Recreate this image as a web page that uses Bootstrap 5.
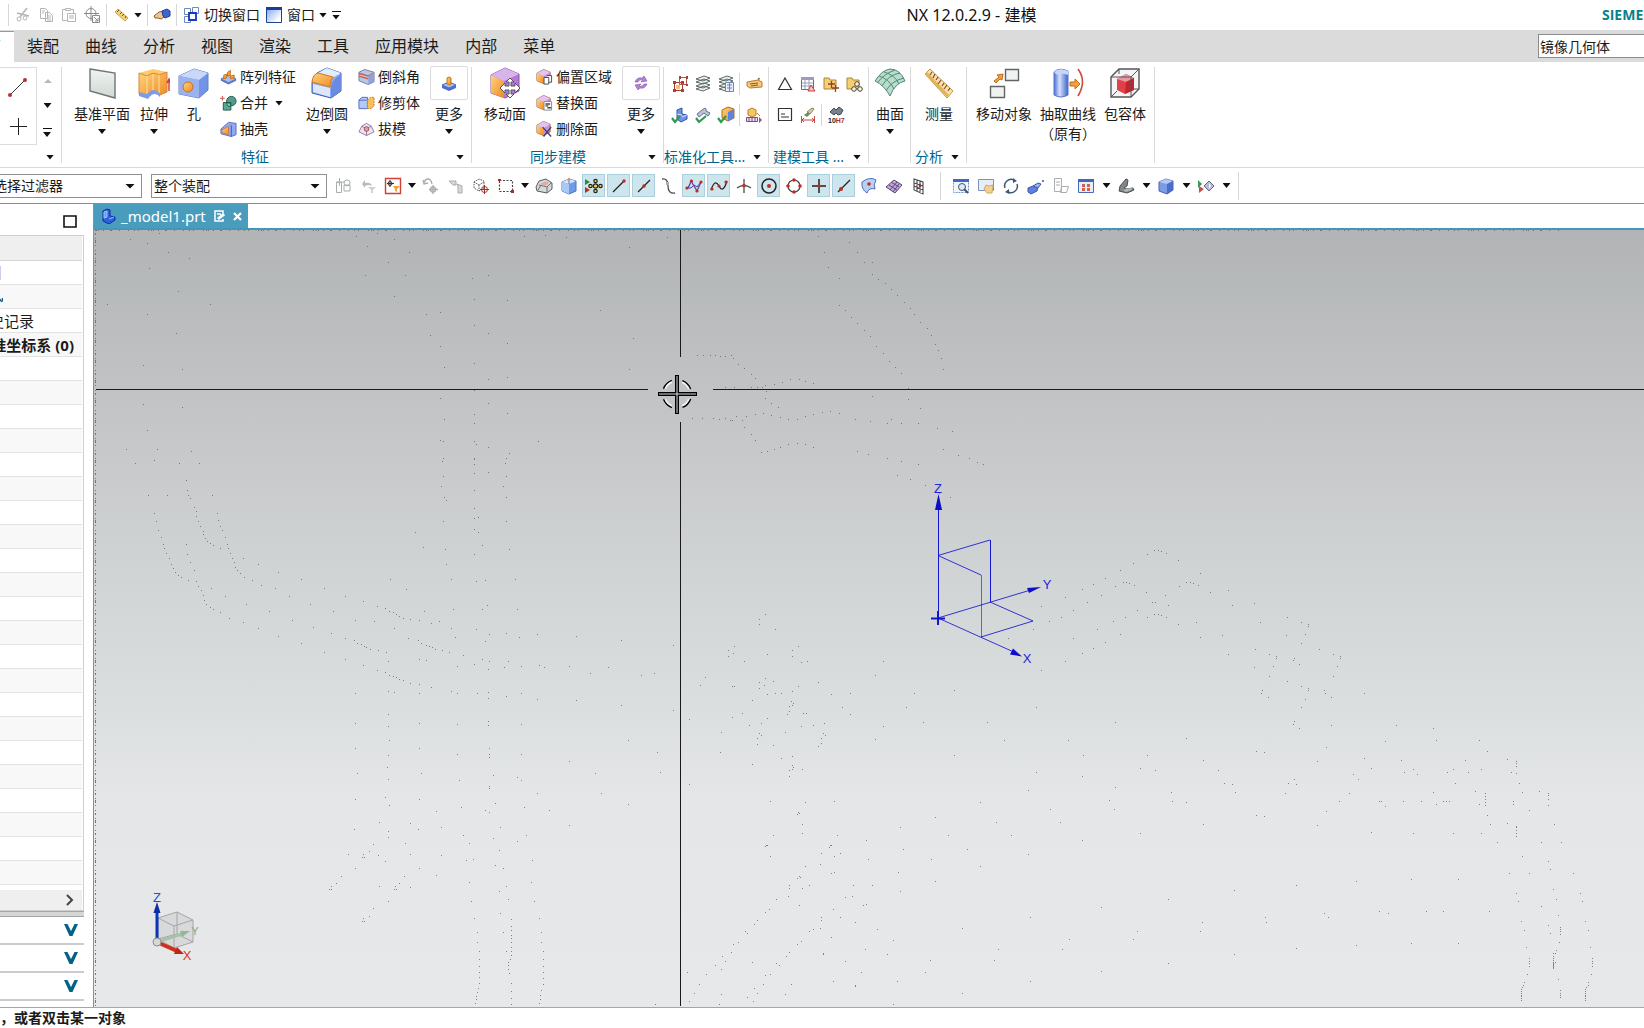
<!DOCTYPE html>
<html lang="zh-CN">
<head>
<meta charset="utf-8">
<meta name="viewport" content="width=device-width, initial-scale=1">
<title>NX 12.0.2.9 - 建模</title>
<link rel="stylesheet" href="https://cdn.jsdelivr.net/npm/bootstrap@5.3.0/dist/css/bootstrap.min.css">
<script src="https://cdn.jsdelivr.net/npm/bootstrap@5.3.0/dist/js/bootstrap.bundle.min.js"></script>
<style>
body{font-family:"Noto Sans","Noto Sans CJK SC",sans-serif;font-size:14px;line-height:20px;color:#1b1b1b;background:#fff;height:100vh;overflow:hidden}
button{background:none;border:0;padding:0;color:inherit;font:inherit;flex:none}
svg{display:block;flex:none}
.ic{width:18px;height:18px}
.ib{width:32px;height:32px}
.dn{display:block;flex:none;width:8px;height:5px;background:#111;clip-path:polygon(0 0,100% 0,50% 100%)}
.dnbar{display:block;flex:none;width:9px;border-top:1px solid #111;padding-top:3px}
.vsep{flex:none;width:1px;background:#d6d6d6}
/* title bar */
.titlebar{height:30px;gap:5px;padding-left:8px}
.titlebar .vsep{height:22px}
.titlebar .ttl{color:#111;font-size:16px}
.brandmark{font-family:"Open Sans","Noto Sans",sans-serif;font-weight:700;color:#0a8189;width:42px;overflow:hidden;white-space:nowrap}
/* menu tabs */
.menubar{height:32px;background:#dbdbdb;overflow:hidden}
.menubar a{color:#1b1b1b;text-decoration:none;font-size:16px;line-height:32px;padding:0 13px;white-space:nowrap}
.menubar a.active{background:#fff;margin-left:-44px;border-top:1px solid #999;line-height:30px}
.finder{width:108px;height:24px;margin-right:-2px;border:1px solid #8b8b8b;border-radius:0;padding:0 1px;font-size:14px;color:#1b1b1b}
/* ribbon */
.ribbon{border-bottom:1px solid #d9d9d9;padding-top:2px;overflow:hidden}
.rgroup{position:relative;white-space:nowrap}
.rgroup+.rgroup::before,.rgroup:last-child::after{content:"";position:absolute;top:3px;bottom:4px;width:1px;left:-1px;background:#dadada}
.rgroup:last-child::after{left:auto;right:0}
.gbody{height:83px;gap:8px}
.gbody.wide{padding:0 4px 0 12px}
.gbody.tight{padding:0 5px}
.gbody.roomy{padding:0 9px}
.gfoot{height:20px;color:#00638a}
.big{display:flex;flex-direction:column;align-items:center;min-width:32px;padding-top:3px}
.big .cap{margin-top:5px}
.big .dn{margin-top:5px}
.big .tile{width:38px;height:34px;border:1px solid #dcdcdc;border-radius:2px;display:flex;align-items:center;justify-content:center;margin:-1px 0}
.smallcol{margin:0 2px}
.smallcol button{display:flex;align-items:center;gap:3px;height:26px}
.smallcol .ic{width:17px}
.mini{padding-top:4px}
.mini button{display:flex;width:23px;height:31px;align-items:center;justify-content:center}
.mini .vsep{height:22px;margin:0 2px}
.gal{width:37px;height:78px;margin-top:3px;border:1px solid #dcdcdc;border-left:0}
.galnav{padding:4px 10px 0 6px}
/* selection bar */
.selbar{height:36px;border-bottom:1px solid #8c8c8c}
.pick{position:relative}
.pick select{appearance:none;width:100%;height:24px;border:1px solid #8f8f8f;border-radius:0;background:#fff;padding:0 2px;font-size:14px;line-height:20px;color:#1b1b1b}
.pick .dn{position:absolute;right:7px;top:10px;width:10px;height:5px;pointer-events:none}
.pick.filter{width:180px;margin-left:-38px}
.pick.scope{width:176px;margin-left:9px}
.tool{width:24px;height:24px;margin-right:1px;display:flex;align-items:center;justify-content:center}
.tool.on{background:#cde6ee;border:1px solid #a9d0dc;width:23px;margin-right:2px;height:23px}
.more{width:14px;height:24px;display:flex;align-items:center;justify-content:center}
.selbar .vsep{height:28px}
.selbar .endcap .more{width:15px}
/* navigator */
.navi{width:93px;overflow:hidden;padding-bottom:6px}
.navi .top{height:31px;padding-top:4px}
.tree{width:84px;border:1px solid #cfcfcf;border-left:0;padding-right:1px;overflow:hidden}
.tree .hd{height:25px;background:#efefef;border-bottom:1px solid #d5d5d5;flex:none}
.tree li{height:24px;display:flex;justify-content:flex-end;align-items:center;border-bottom:1px solid #e3e3e3;white-space:nowrap;font-size:15px;flex:none}
.tree li:nth-child(even){background:#f8f8f8}
.tree li.edge{justify-content:flex-start}
.tree .empty{background:repeating-linear-gradient(#fff 0 23px,#e3e3e3 23px 24px,#f8f8f8 24px 47px,#e3e3e3 47px 48px)}
.tree .ft{height:20px;background:#efefef;flex:none}
.grip{width:84px;height:6px;background:#d6d6d6;border-top:1px solid #a5a5a5;border-bottom:1px solid #a5a5a5;flex:none}
.fold{width:84px;height:28px;border-bottom:2px solid #cbcbcb;display:flex;align-items:center;justify-content:flex-end;padding-right:6px}
/* view */
.view{border-left:1px solid #8a8f91;min-width:0}
.doctab{height:24px;background:#4a9cbd;color:#fff;font:15px/24px "Noto Sans",sans-serif;padding:0 6px 0 7px}
.docline{height:2px;background:#4595b8}
.scene{background:linear-gradient(#b2b3b5 0,#b7babb 8%,#bdbec0 14%,#c6c8ca 28%,#d2d5d6 46%,#dbdede 61%,#e4e6e7 73%,#e7e8ea 100%);overflow:hidden;position:relative}
.status{height:21px;border-top:1px solid #a6a6a6;font-weight:700;white-space:nowrap}
</style>
</head>
<body class="d-flex flex-column">

<svg width="0" height="0" class="position-absolute" aria-hidden="true">
<defs>
<linearGradient id="gb" x1="0" y1="0" x2="1" y2="1"><stop offset="0" stop-color="#c3d6fa"/><stop offset="1" stop-color="#5f80e0"/></linearGradient>
<linearGradient id="go" x1="0" y1="0" x2="1" y2="1"><stop offset="0" stop-color="#ffd37a"/><stop offset="1" stop-color="#f08a24"/></linearGradient>
<linearGradient id="gp" x1="0" y1="0" x2="0" y2="1"><stop offset="0" stop-color="#f0f3f1"/><stop offset="1" stop-color="#cfd9d4"/></linearGradient>
<linearGradient id="gw" x1="0" y1="0" x2="1" y2="1"><stop offset="0" stop-color="#7aa0f0"/><stop offset=".8" stop-color="#fff"/></linearGradient>
<linearGradient id="gc"><stop offset="0" stop-color="#4a6fd8"/><stop offset=".4" stop-color="#d3e0fb"/><stop offset="1" stop-color="#4064cc"/></linearGradient>

<symbol id="cut" viewBox="0 0 18 18"><path d="M13 2L6 11M3 7l12 3" stroke="#b5b5b5" stroke-width="1.6" fill="none"/><circle cx="5" cy="13" r="2" fill="none" stroke="#b5b5b5"/><circle cx="11" cy="12" r="2" fill="none" stroke="#b5b5b5"/></symbol>
<symbol id="copy" viewBox="0 0 18 18"><g fill="#fff" stroke="#b5b5b5"><path d="M3.500 2.500h5l2 2v8h-7zM8.500 6.500h4l3 3v6h-7z"/><path d="M10 10h4M10 12h4M10 14h4M5 5h3M5 7h2"/></g></symbol>
<symbol id="paste" viewBox="0 0 18 18"><g fill="#fff" stroke="#b5b5b5"><path d="M2.500 3.500h11v11h-11z"/><path d="M5.500 2.500h5v2h-5zM7.500 7.500h8v8h-8z"/><path d="M9 10h5M9 12h5"/></g></symbol>
<symbol id="snapc" viewBox="0 0 18 18"><g fill="none" stroke="#8b8b8b"><circle cx="8" cy="7.500" r="5"/><path d="M8 0v15M1 7.500h15"/><path d="M9.500 9.500h7v7h-7z" fill="#fff"/><path d="M11 11l4 4m0-3v3h-3"/></g></symbol>
<symbol id="rul" viewBox="0 0 18 18"><path d="M3 6l3-3 10 9-3 3z" fill="#f5d477" stroke="#c9a050"/><path d="M5 6l2-2M8 8l2-2M10 10l2-2M13 12l1-2" stroke="#77531a"/></symbol>
<symbol id="hand" viewBox="0 0 18 18"><path d="M1 10l5-4 6-1 1 5-5 3-3-1H2z" fill="#f0c493" stroke="#8d5f2b"/><path d="M9 5l5-2 3 2v5l-5 2-2-2z" fill="#3d66d0" stroke="#1f3f9b"/></symbol>
<symbol id="wins" viewBox="0 0 18 18"><g fill="#fff" stroke="#6a8abc"><path d="M2.500 2.500h6v6h-6zM10.500 1.500h6v6h-6zM2.500 10.500h6v6h-6z"/></g><path d="M7 7h7v7H7z" fill="#fff" stroke="#1438c8" stroke-width="1.800"/></symbol>
<symbol id="win" viewBox="0 0 18 18"><path d="M1.500 1.500h15v15h-15z" fill="url(#gw)" stroke="#1e4488"/><path d="M1 1h16v3H1z" fill="#173e9a"/></symbol>

<symbol id="plane" viewBox="0 0 32 32"><path d="M4 2l25 4v25L4 24z" fill="url(#gp)" stroke="#6e7572" stroke-width="1.400"/></symbol>
<symbol id="extr" viewBox="0 0 32 32"><path d="M1 6l14-4 14 3v19l-4 3V14z" fill="#ffc968"/><path d="M1 6l8 3q7-5 12-1l8-3v20l-7 3q-6-7-12 2l-9-3z" fill="url(#go)" stroke="#d28a3a"/><path d="M9 9v20M15 7v18M21 8v18" stroke="#fbe0a5"/><path d="M1 25l8 2q7-8 13 0v3q-6-7-12 2l-9-3z" fill="#7d9be8"/><path d="M31 24V13m-2 3l2-4 1.500 4" stroke="#cf3a2a" fill="none" stroke-width="1.400"/></symbol>
<symbol id="hole" viewBox="0 0 32 32"><path d="M1 9L16 2l14 4v17l-9 8-20-4z" fill="#7193e8" stroke="#6580cb"/><path d="M1 9L16 2l14 4-9 7z" fill="#c9d8f8"/><path d="M1 9l20 4v18L1 27z" fill="#9ab2f0"/><circle cx="10" cy="20" r="5" fill="url(#go)" stroke="#c9721a"/></symbol>
<symbol id="blend" viewBox="0 0 32 32"><path d="M1 16q1-7 5-10l10-5 14 5v18l-10 7-19-5z" fill="#8fabf0" stroke="#3d5cb8"/><path d="M7 6l9-5 14 5-7 4z" fill="#e3ecfd"/><path d="M20 31V19q1-6 10-12v17z" fill="#6a8ae3"/><path d="M1 15q1-8 6-9l15 4q-3 3-3 10z" fill="url(#go)" stroke="#d97a1c"/><path d="M2 17l17 4v9L2 25z" fill="#dce7fc"/></symbol>
<symbol id="movef" viewBox="0 0 32 32"><path d="M2 8L16 1l14 6v17l-14 7L2 26z" fill="#b678d8" stroke="#8952a8"/><path d="M2 8l13 6v17L2 26z" fill="url(#go)"/><path d="M2 8L16 1l14 6-15 7z" fill="#d9b3ec"/><path d="M21 11l4 4h-3v4h4v-3l5 5-5 5v-3h-4v4h3l-4 4-4-4h3v-4h-4v3l-5-5 5-5v3h4v-4h-3z" fill="#fff" stroke="#555"/></symbol>
<symbol id="surf" viewBox="0 0 32 32"><path d="M1 14Q8 3 16 2q10 0 15 12-10 2-15 15-6-11-15-15z" fill="#b9dccb" stroke="#4e8a76"/><path d="M5 9q10 3 15 13M10 5q11 3 15 12M26 6Q14 8 8 19M21 3Q10 7 4 15M30 11Q17 14 12 24" stroke="#4e8a76" fill="none"/></symbol>
<symbol id="measure" viewBox="0 0 32 32"><path d="M2 7l5-5 23 22-6 7z" fill="#f9e3a3" stroke="#c09a4b"/><path d="M2 7l22 23 2-2L4 5z" fill="#e0b458"/><path d="M9 5l-2 3M12 7l-2 4M15 10l-2 3M18 13l-3 4M21 16l-2 3M24 18l-3 4M27 21l-2 3" stroke="#8c4040" stroke-width="1.200"/></symbol>
<symbol id="moveo" viewBox="0 0 32 32"><path d="M17.500 2.500h13v11h-13zM2.500 19.500h14v11h-14z" fill="#eef2f0" stroke="#616664" stroke-width="1.400"/><path d="M6 14l5-4-2-2 6-1-1 6-2-1-4 4z" fill="#f4a040" stroke="#c06d1c"/></symbol>
<symbol id="curve" viewBox="0 0 32 32"><path d="M2 5q5-5 14-1v24q-7 4-14 0z" fill="url(#gc)" stroke="#5674c8"/><path d="M2 5q5-5 14-1v4q-7-3-9 0-3 0-5-3z" fill="#c6d6fa"/><path d="M18 15h5v-3l5 5-5 5v-3h-5z" fill="#f4a040" stroke="#c06d1c"/><path d="M26 2q9 12 0 27" fill="none" stroke="#d2483d" stroke-width="1.600"/></symbol>
<symbol id="bound" viewBox="0 0 32 32"><path d="M2 10L10 2h20v20l-8 8H2z" fill="#f4f5f6" stroke="#555" stroke-width="1.400"/><path d="M8 12l9-5 8 4v12l-9 4-8-4z" fill="#e04048"/><path d="M8 12l9-5 8 4-8 4z" fill="#e99aa0"/><path d="M17 15l8-4v12l-9 4z" fill="#c4242e"/><path d="M2 10h20v20M22 10l8-8M10 2v5M30 22h-5M8 24l-6 6" fill="none" stroke="#555"/></symbol>

<symbol id="patt" viewBox="0 0 18 18"><path d="M1 11l8-4 8 4-8 4z" fill="#a8bff3" stroke="#5874c4"/><path d="M1 11l8 4v2l-8-4zM17 11l-8 4v2l8-4z" fill="#5874c4"/><path d="M4 7l3-1v4l-3 1zM8 4l3-2v5l-3 1zM11 8l4-1v3l-4 1z" fill="#f7a440" stroke="#c76f1a"/></symbol>
<symbol id="unite" viewBox="0 0 18 18"><path d="M0 4h5M2.500 1.500v5" stroke="#c84c43"/><circle cx="12" cy="7" r="5" fill="#4f9d8a" stroke="#23584b"/><path d="M3.500 8.500h8v8h-8z" fill="#5aa893" stroke="#23584b"/><path d="M7 9h4v4q-4 0-4-4z" fill="#9cd0c1" stroke="#23584b"/></symbol>
<symbol id="shell" viewBox="0 0 18 18"><path d="M1 9L9 2l8 1v12l-5 2-11-3z" fill="#8eaaf0" stroke="#5670be"/><path d="M2 10l7-4v9l-7-2z" fill="url(#go)" stroke="#c77a5a"/><path d="M12 5v12" stroke="#405cb0"/></symbol>
<symbol id="chamf" viewBox="0 0 18 18"><path d="M1 4l6-3 10 3v10l-6 3-10-4z" fill="#b9c6ec" stroke="#777d96"/><path d="M1 5l10 3 5-3M1 8l10 3" stroke="#cf5a3a" stroke-width="1.500" fill="none"/><path d="M11 8v9l6-3V4z" fill="#8fa2dc"/></symbol>
<symbol id="trim" viewBox="0 0 18 18"><path d="M1 6l3-3h6v12H1z" fill="#b6c9f6" stroke="#4f6cc0"/><path d="M10 6l3-3h4v9l-3 3h-4z" fill="#f9bf58" stroke="#c77b26" stroke-dasharray="2 1"/><path d="M1 6h8" stroke="#4f6cc0"/></symbol>
<symbol id="draft" viewBox="0 0 18 18"><path d="M1 12l3-6 5-3 5 3 3 6-8 4z" fill="#ece4f1" stroke="#8a7b9c"/><path d="M9 16V9M4 6l5 3 5-3" stroke="#8a7b9c" fill="none"/><circle cx="9" cy="9" r="2.500" fill="#d9a0a8" stroke="#a3505c"/></symbol>
<symbol id="more1" viewBox="0 0 18 18"><path d="M2 11l7-3 7 3-7 3z" fill="#a8bff3" stroke="#4967b8"/><path d="M2 11v3l7 3v-3zM16 11v3l-7 3v-3z" fill="#4b6fd0"/><path d="M7 4q2-2 4 0v6q-2 2-4 0z" fill="url(#go)" stroke="#c9721a"/></symbol>
<symbol id="more2" viewBox="0 0 18 18"><path d="M3 8q2-5 7-4l2-2 3 5-6 1 2-2q-4-1-5 2zM15 10q-2 5-7 4l-2 2-3-5 6-1-2 2q4 1 5-2z" fill="#b67fd6" stroke="#8a55ab" stroke-width=".6"/></symbol>
<symbol id="cubeo" viewBox="0 0 18 18"><path d="M1 5l7-4 7 3v8l-7 4-7-3z" fill="#c793e2" stroke="#a0664a"/><path d="M1 5l7 3v8l-7-3z" fill="url(#go)"/><path d="M1 5l7-4 7 3-7 4z" fill="#e3c4ee"/></symbol>
<symbol id="offs" viewBox="0 0 18 18"><use href="#cubeo"/><path d="M8.500 9.500h5v7h-5zM11.500 7.500h5v7h-3" fill="#fff" stroke="#444"/></symbol>
<symbol id="repl" viewBox="0 0 18 18"><use href="#cubeo"/><path d="M8.500 7.500h8v9h-8z" fill="#fff" stroke="#888"/><path d="M10 10h5M10 12h3M12 14h4" stroke="#444" stroke-width="1.500"/></symbol>
<symbol id="delf" viewBox="0 0 18 18"><use href="#cubeo"/><path d="M7 7l9 10M16 7l-8 10" stroke="#474064" stroke-width="1.500"/></symbol>

<symbol id="n1" viewBox="0 0 18 18"><g fill="none" stroke="#9b3b33"><path d="M3.500 7.500h8v8h-8z"/><path d="M8.500 2.500h7v7h-7z" stroke="#c0504a"/></g><path d="M2 6h3v3H2zM10 6h3v3h-3zM2 14h3v3H2zM10 14h3v3h-3zM15 1h2v3h-2zM8 1h2v3H8zM15 9h2v2h-2z" fill="#a2443a"/><path d="M5 10h4v4H5z" fill="#f7c06a"/></symbol>
<symbol id="n2" viewBox="0 0 18 18"><g fill="#eef1ee" stroke="#5d6a64"><path d="M2 14l8-3 6 2-7 3zM2 11l8-3 6 2-7 3zM2 7l8-3 6 2-7 3zM2 4l8-3 6 2-7 3z"/></g></symbol>
<symbol id="n3" viewBox="0 0 18 18"><use href="#n2"/><path d="M8.500 7.500h8v9h-8z" fill="#e8eefc" stroke="#7288bb"/><path d="M10 10h5M10 13h5M12.500 8v8" stroke="#7288bb"/></symbol>
<symbol id="n4" viewBox="0 0 18 18"><path d="M2 7l11-2 4 2v5l-12 1-3-2z" fill="#f7c877" stroke="#b77d2e"/><path d="M5 9l8-1M6 11l7-1M14 5q-2-3 1-1" stroke="#8a5a1c" fill="none"/></symbol>
<symbol id="n5" viewBox="0 0 18 18"><path d="M6 4l5-2v6l5 1v4l-6 3-4-3z" fill="#6f92ea" stroke="#3553a8"/><path d="M11 11l5-2M6 8l5 1" stroke="#d3e0fb"/><path d="M1 12l3 4 5-6" stroke="#2f9a52" stroke-width="2.200" fill="none"/></symbol>
<symbol id="n6" viewBox="0 0 18 18"><path d="M3 8l5-4q5-4 4 1l4 2-2 3-4-3-5 4z" fill="#b9c6d8" stroke="#60708a"/><path d="M2 12l3 4 7-6" stroke="#2f9a52" stroke-width="2.200" fill="none"/></symbol>
<symbol id="n7" viewBox="0 0 18 18"><path d="M5 4l6-3 6 2v9l-6 3-6-3z" fill="url(#go)" stroke="#b26a1a"/><path d="M11 6l6-3v9l-6 3z" fill="#5d82e0"/><path d="M1 12l3 4 5-6" stroke="#2f9a52" stroke-width="2.200" fill="none"/></symbol>
<symbol id="n8" viewBox="0 0 18 18"><path d="M3 4l4-2 4 2v5l-4 2-4-2z" fill="#f9c65e" stroke="#b77d2e"/><path d="M1.500 11.500h11v4h-11z" fill="#e9e0f2" stroke="#7a4a94"/><path d="M4 12v3M7 12v3M10 12v3" stroke="#7a4a94"/><path d="M12 7l3 3" stroke="#b77d2e"/><path d="M14 11l3 3-3 3z" fill="#a04a94"/></symbol>
<symbol id="k1" viewBox="0 0 18 18"><path d="M9 3l6.500 11.500h-13z" fill="#fff" stroke="#333" stroke-width="1.200"/></symbol>
<symbol id="k2" viewBox="0 0 18 18"><path d="M2.500 2.500h12v12h-12z" fill="#fff" stroke="#6b6b86"/><path d="M2 2h13v3H2z" fill="#9c9cc0"/><path d="M3 8h11M3 11h11M6 5v9M10 5v9" stroke="#9aa0b9"/><path d="M12 10l4 6H9z" fill="#f3c3bd" stroke="#c43e35"/></symbol>
<symbol id="k3" viewBox="0 0 18 18"><path d="M2 3h5l1 2h6v9H2z" fill="#f6cf74" stroke="#a98436"/><path d="M6 9h7M9.500 6v7M10 13h7M13.500 10v7" stroke="#9a3f1f" stroke-width="1.300"/></symbol>
<symbol id="k4" viewBox="0 0 18 18"><path d="M2 3h5l1 2h6v9H2z" fill="#f6cf74" stroke="#a98436"/><g fill="#fff6d8" stroke="#444"><circle cx="12" cy="9" r="2.300"/><circle cx="9" cy="14" r="2.300"/><circle cx="15" cy="14" r="2.300"/></g></symbol>
<symbol id="k5" viewBox="0 0 18 18"><path d="M2.500 2.500h13v12h-13z" fill="#fff" stroke="#333" stroke-width="1.200"/><path d="M5 8h4M5 11h8" stroke="#333"/></symbol>
<symbol id="k6" viewBox="0 0 18 18"><path d="M2.500 10v7M15.500 10v7M3 14h12M5 12l-2 2 2 2M13 12l2 2-2 2" stroke="#c24a42" fill="none"/><path d="M8 6l5-4 2 1-4 5z" fill="#d8ce9c" stroke="#8b8458"/><path d="M5 9l4-3 2 2-3 3z" fill="#6f8c58"/></symbol>
<symbol id="k7" viewBox="0 0 18 18"><path d="M3 6l4-4 2 2 3-3 4 3-2 4-3 1-2-2-2 2z" fill="#77818c" stroke="#414a54"/><text x="1" y="17" font-size="7" font-weight="700" font-family="Liberation Sans" fill="#222">10<tspan fill="#a8322c">H7</tspan></text></symbol>

<symbol id="t1" viewBox="0 0 18 18"><g fill="none" stroke="#a9adab"><path d="M2.500 5.500h5v10h-5zM5.500 1v8M2 5h8"/><circle cx="13" cy="6" r="3"/><path d="M10 8h6v6h-6z"/></g></symbol>
<symbol id="t2" viewBox="0 0 18 18"><path d="M3 7l3-4v3q6-1 7 3-4-2-7 0v2z" fill="#b7bab8"/><path d="M9 10h8l-3 3v3h-2v-3z" fill="#d2d2cf"/></symbol>
<symbol id="t3" viewBox="0 0 18 18"><path d="M1.500 1.500h15v15h-15z" fill="#fff" stroke="#cf4036" stroke-width="1.400"/><path d="M6 3v7M3 6.500h7" stroke="#333"/><circle cx="6" cy="6.500" r="2" fill="none" stroke="#333"/><path d="M9 9h7l-3 3v3l-2-1v-2z" fill="#f5a03c"/></symbol>
<symbol id="t4" viewBox="0 0 18 18"><g fill="none" stroke="#a9adab" stroke-width="1.300"><path d="M2 6q1-4 4-4t4 5M1 3l1 4 4-1"/><path d="M11 8v9M7 12.500h9"/><circle cx="11" cy="12.500" r="2.500"/></g></symbol>
<symbol id="t5" viewBox="0 0 18 18"><path d="M2 4h7v4H6zM10 7l5 2v7h-4v-6z" fill="#d5d8d6" stroke="#a9adab"/></symbol>
<symbol id="t6" viewBox="0 0 18 18"><path d="M2 5l5-3 5 2v7l-5 3-5-3zM2 5l5 3 5-3M7 8v6" fill="none" stroke="#555" stroke-dasharray="1.500 1"/><path d="M12.500 8v9M8 12.500h9" stroke="#a4322c"/><circle cx="12.500" cy="12.500" r="3" fill="none" stroke="#a4322c"/></symbol>
<symbol id="t7" viewBox="0 0 18 18"><path d="M2.500 3.500h13v11h-13z" fill="none" stroke="#444" stroke-width="1.200" stroke-dasharray="2 1.500"/><path d="M1 2h3v2H1zM14 13h3v3h-3z" fill="#a4322c"/></symbol>
<symbol id="t8" viewBox="0 0 18 18"><path d="M1 10l3-6 7-2 6 4v6l-5 4-10-2z" fill="#d5d9db" stroke="#565c5e"/><path d="M4 8l8 2 4-4M12 10v6M3 13l3-5" stroke="#6d7476" fill="none"/><path d="M5 7l6-3 3 2-4 3z" fill="#e6a9a0"/></symbol>
<symbol id="t9" viewBox="0 0 18 18"><path d="M2 5l7-3 7 2v10l-7 3-7-3z" fill="#6f9be8" stroke="#4c70be"/><path d="M2 5l7-3 7 2-7 3z" fill="#d4e6fb"/><path d="M2 5l7 2v10l-7-3z" fill="#a9c9f5"/><path d="M9 1v6" stroke="#b85555"/></symbol>
<symbol id="t10" viewBox="0 0 18 18"><path d="M0 2l5 3-5 3z" fill="#2b8a3c"/><path d="M0 16l5-3-5-3z" fill="#b83228"/><g fill="#f4d34c" stroke="#222" stroke-width="1.200"><circle cx="10.500" cy="9" r="2.200"/><circle cx="10.500" cy="4" r="1.700"/><circle cx="10.500" cy="14" r="1.700"/><circle cx="5.500" cy="9" r="1.700"/><circle cx="15.500" cy="9" r="1.700"/></g></symbol>
<symbol id="t11" viewBox="0 0 18 18"><path d="M3 15L14 4" stroke="#222" stroke-width="1.300"/><circle cx="14" cy="4" r="1.700" fill="#c22b24"/></symbol>
<symbol id="t12" viewBox="0 0 18 18"><path d="M3 15L15 3" stroke="#222" stroke-width="1.300"/><circle cx="9" cy="9" r="1.800" fill="#c22b24"/></symbol>
<symbol id="t13" viewBox="0 0 18 18"><path d="M2 2q6-1 6 7t7 7" fill="none" stroke="#4c4f50" stroke-width="1.300"/><path d="M6 5h3v3H6z" fill="#b9a9a5"/></symbol>
<symbol id="t14" viewBox="0 0 18 18"><path d="M1 12q3-1 5-8l6 10 4-9" fill="none" stroke="#5b3ba0" stroke-width="1.200"/><path d="M1 11h5l3-3 3 2 4-5" fill="none" stroke="#5b3ba0"/><g fill="#c22b24"><circle cx="2" cy="11" r="1.600"/><circle cx="6.500" cy="4" r="1.600"/><circle cx="12" cy="14" r="1.600"/><circle cx="16" cy="5" r="1.600"/></g></symbol>
<symbol id="t15" viewBox="0 0 18 18"><path d="M1 13q4-12 8-4t8-5" fill="none" stroke="#222" stroke-width="1.300"/><g fill="#c22b24"><circle cx="2" cy="12" r="1.600"/><circle cx="9" cy="9" r="1.600"/><circle cx="16" cy="5" r="1.600"/></g></symbol>
<symbol id="t16" viewBox="0 0 18 18"><path d="M9 2v14M2 11q7-5 14 0" fill="none" stroke="#4c4f50" stroke-width="1.300"/><circle cx="9" cy="8.500" r="1.700" fill="#c22b24"/></symbol>
<symbol id="t17" viewBox="0 0 18 18"><circle cx="9" cy="9" r="7" fill="none" stroke="#222" stroke-width="1.500"/><circle cx="9" cy="9" r="2" fill="#c22b24"/></symbol>
<symbol id="t18" viewBox="0 0 18 18"><circle cx="9" cy="9" r="6" fill="none" stroke="#444" stroke-width="1.200"/><g fill="#c22b24"><circle cx="9" cy="3" r="1.800"/><circle cx="9" cy="15" r="1.800"/><circle cx="3" cy="9" r="1.800"/><circle cx="15" cy="9" r="1.800"/></g></symbol>
<symbol id="t19" viewBox="0 0 18 18"><path d="M9 2v14M2 9h14" stroke="#222" stroke-width="1.500"/><circle cx="9" cy="9" r="1.800" fill="#c22b24"/></symbol>
<symbol id="t20" viewBox="0 0 18 18"><path d="M3 15L15 3" stroke="#222" stroke-width="1.300"/><circle cx="6" cy="12" r="2" fill="#c22b24"/></symbol>
<symbol id="t21" viewBox="0 0 18 18"><path d="M2 5q8-6 14-2-3 5-1 9-6-2-8 4-6-4-5-11z" fill="#b9d0f4" stroke="#4a70b8"/><circle cx="9" cy="7" r="1.800" fill="#c22b24"/></symbol>
<symbol id="t22" viewBox="0 0 18 18"><path d="M1 10l8-7 8 5-7 8z" fill="#c6a6d8" stroke="#5a4a80"/><path d="M4 8l8 5M6 5l8 5M5 13l7-8M8 15l6-8" stroke="#5a4a80"/></symbol>
<symbol id="t23" viewBox="0 0 18 18"><path d="M4 2l9 3v12l-9-4zM7 3v11M10 4v12M4 6l9 3M4 9l9 4" fill="none" stroke="#464a4a" stroke-width="1.100"/><circle cx="10" cy="9" r="1.300" fill="#c22b24"/></symbol>
<symbol id="v1" viewBox="0 0 18 18"><path d="M1.500 2.500h15v13h-15z" fill="#f1f5fc" stroke="#7a92c0" stroke-dasharray="2 1"/><path d="M1 2h16v3H1z" fill="#3f66c8"/><circle cx="10" cy="10" r="3.500" fill="#dcebfb" stroke="#456"/><path d="M12 12l4 4" stroke="#456" stroke-width="2"/></symbol>
<symbol id="v2" viewBox="0 0 18 18"><path d="M1.500 2.500h15v11h-15z" fill="#e8edf8" stroke="#7a92c0"/><path d="M9 8l3 1 4-1-1 8h-5l-3-4z" fill="#f5d08c" stroke="#d0a868"/></symbol>
<symbol id="v3" viewBox="0 0 18 18"><path d="M3 11a6.500 6.500 0 0 1 9-8M15 7a6.500 6.500 0 0 1-9 8" fill="none" stroke="#3f5678" stroke-width="1.500"/><path d="M11 1l4 3-4 2zM7 12l-4 3 4 2z" fill="#3f5678"/></symbol>
<symbol id="v4" viewBox="0 0 18 18"><path d="M1 11l5-2 5 1-1 4-6 3-3-2z" fill="#5f80e0" stroke="#3a56b0"/><path d="M6 9l5-3 3 1-3 4z" fill="#9db4f2" stroke="#3a56b0"/><circle cx="16" cy="4" r="1" fill="#555"/></symbol>
<symbol id="v5" viewBox="0 0 18 18"><path d="M2.500 1.500h7v13h-7zM4 5h4M4 8h4M9.500 9.500h7l-2 6h-6z" fill="#fff" stroke="#a9adab"/></symbol>
<symbol id="v6" viewBox="0 0 18 18"><path d="M1.500 2.500h15v13h-15z" fill="#e8edf8" stroke="#4a68b8"/><path d="M1 2h16v3H1z" fill="#3f66c8"/><path d="M5 7h3v3H5zM10 7h3v3h-3zM5 11h3v3H5zM10 11h3v3h-3z" fill="#d2604a"/></symbol>
<symbol id="v7" viewBox="0 0 18 18"><path d="M3 9l6-7 2 1-1 6-3 2 2 1 7-1 1 2-7 3-8-2z" fill="#818789" stroke="#4b5052"/><path d="M6 13l7-2 3 1-7 3z" fill="#b5babb"/></symbol>
<symbol id="v8" viewBox="0 0 18 18"><path d="M2 5l7-3 7 2v9l-6 4-8-3z" fill="#7d9ae6" stroke="#4a62b4"/><path d="M2 5l7-3 7 2-6 3z" fill="#b6c9f6"/><path d="M10 7l6-3v9l-6 4z" fill="#4d6cca"/></symbol>
<symbol id="v9" viewBox="0 0 18 18"><path d="M1 3l4 4-4 4z" fill="#3d9a55"/><path d="M2 16l5-4-5-3z" fill="#c4524a"/><path d="M7 9l5-5 5 5-5 5z" fill="#b8b9d6" stroke="#66688c"/><path d="M12 6l2 3-2 3z" fill="#fff"/></symbol>
<symbol id="part" viewBox="0 0 16 16"><path d="M2 3l4-2 3 1v6l5 1v3l-6 4-6-3z" fill="#2c61dc" stroke="#0a2f9c"/><path d="M3 4l3-1v6l-3 1zM8 11l5-2" stroke="#9bc0ff" fill="#6f9cf5"/></symbol>
</defs></svg>

<header class="titlebar d-flex align-items-center">
  <span class="vsep"></span>
  <button aria-label="剪切"><svg class="ic"><use href="#cut"/></svg></button>
  <button aria-label="复制"><svg class="ic"><use href="#copy"/></svg></button>
  <button aria-label="粘贴"><svg class="ic"><use href="#paste"/></svg></button>
  <button aria-label="捕捉"><svg class="ic"><use href="#snapc"/></svg></button>
  <span class="vsep"></span>
  <button class="d-flex align-items-center gap-1" aria-label="测量"><svg class="ic"><use href="#rul"/></svg><i class="dn"></i></button>
  <span class="vsep"></span>
  <button aria-label="触控"><svg class="ic"><use href="#hand"/></svg></button>
  <span class="vsep"></span>
  <button class="d-flex align-items-center gap-1"><svg class="ic"><use href="#wins"/></svg>切换窗口</button>
  <button class="d-flex align-items-center gap-1"><svg class="ic"><use href="#win"/></svg>窗口<i class="dn"></i></button>
  <button aria-label="工具条选项"><i class="dnbar"><i class="dn"></i></i></button>
  <div class="ttl flex-grow-1 text-center">NX 12.0.2.9 - 建模</div>
  <div class="brandmark">SIEMENS</div>
</header>

<nav class="menubar d-flex align-items-center">
  <a href="#" class="active">主页</a><a href="#">装配</a><a href="#">曲线</a><a href="#">分析</a><a href="#">视图</a><a href="#">渲染</a><a href="#">工具</a><a href="#">应用模块</a><a href="#">内部</a><a href="#">菜单</a>
  <input class="finder ms-auto" type="text" value="镜像几何体" aria-label="命令查找器">
</nav>

<div class="ribbon d-flex align-items-stretch">
  <section class="rgroup d-flex flex-column">
    <div class="gbody d-flex gap-0">
      <div class="gal d-flex flex-column align-items-center justify-content-around">
        <button aria-label="直线"><svg width="22" height="22"><path d="M2 19L19 2" stroke="#333"/><circle cx="3" cy="18" r="2" fill="#bb2f2f"/><circle cx="18" cy="3" r="2" fill="#bb2f2f"/></svg></button>
        <button aria-label="点"><svg width="18" height="18"><path d="M9.500 1v17M1 9.500h17" stroke="#222"/></svg></button>
      </div>
      <div class="galnav d-flex flex-column align-items-center justify-content-around">
        <button class="opacity-50" aria-label="上一行"><svg width="8" height="5"><path d="M0 5l4-4 4 4z" fill="#777"/></svg></button>
        <button aria-label="下一行"><i class="dn"></i></button>
        <button aria-label="展开"><i class="dnbar"><i class="dn"></i></i></button>
      </div>
    </div>
    <div class="gfoot d-flex align-items-center justify-content-end pe-2"><i class="dn"></i></div>
  </section>

  <section class="rgroup d-flex flex-column">
    <div class="gbody wide d-flex">
      <button class="big"><svg class="ib"><use href="#plane"/></svg><span class="cap">基准平面</span><i class="dn"></i></button>
      <button class="big"><svg class="ib"><use href="#extr"/></svg><span class="cap">拉伸</span><i class="dn"></i></button>
      <button class="big"><svg class="ib"><use href="#hole"/></svg><span class="cap">孔</span></button>
      <div class="smallcol">
        <button><svg class="ic"><use href="#patt"/></svg>阵列特征</button>
        <button><svg class="ic"><use href="#unite"/></svg>合并<i class="dn ms-1"></i></button>
        <button><svg class="ic"><use href="#shell"/></svg>抽壳</button>
      </div>
      <button class="big"><svg class="ib"><use href="#blend"/></svg><span class="cap">边倒圆</span><i class="dn"></i></button>
      <div class="smallcol">
        <button><svg class="ic"><use href="#chamf"/></svg>倒斜角</button>
        <button><svg class="ic"><use href="#trim"/></svg>修剪体</button>
        <button><svg class="ic"><use href="#draft"/></svg>拔模</button>
      </div>
      <button class="big"><span class="tile"><svg class="ic"><use href="#more1"/></svg></span><span class="cap">更多</span><i class="dn"></i></button>
    </div>
    <div class="gfoot d-flex align-items-center"><span class="flex-grow-1 text-center pe-2">特征</span><i class="dn me-2"></i></div>
  </section>

  <section class="rgroup d-flex flex-column">
    <div class="gbody wide d-flex">
      <button class="big"><svg class="ib"><use href="#movef"/></svg><span class="cap">移动面</span></button>
      <div class="smallcol">
        <button><svg class="ic"><use href="#offs"/></svg>偏置区域</button>
        <button><svg class="ic"><use href="#repl"/></svg>替换面</button>
        <button><svg class="ic"><use href="#delf"/></svg>删除面</button>
      </div>
      <button class="big"><span class="tile"><svg class="ic"><use href="#more2"/></svg></span><span class="cap">更多</span><i class="dn"></i></button>
    </div>
    <div class="gfoot d-flex align-items-center"><span class="flex-grow-1 text-center pe-1">同步建模</span><i class="dn me-2"></i></div>
  </section>

  <section class="rgroup d-flex flex-column">
    <div class="gbody px-1"><div class="mini">
      <div class="d-flex align-items-center"><button aria-label="属性"><svg class="ic"><use href="#n1"/></svg></button><button aria-label="图层"><svg class="ic"><use href="#n2"/></svg></button><button aria-label="图层类别"><svg class="ic"><use href="#n3"/></svg></button><span class="vsep"></span><button aria-label="标签"><svg class="ic"><use href="#n4"/></svg></button></div>
      <div class="d-flex align-items-center"><button aria-label="检查体"><svg class="ic"><use href="#n5"/></svg></button><button aria-label="检查曲线"><svg class="ic"><use href="#n6"/></svg></button><button aria-label="检查装配"><svg class="ic"><use href="#n7"/></svg></button><span class="vsep"></span><button aria-label="标准件"><svg class="ic"><use href="#n8"/></svg></button></div>
    </div></div>
    <div class="gfoot d-flex align-items-center justify-content-between"><span>标准化工具...</span><i class="dn me-2"></i></div>
  </section>

  <section class="rgroup d-flex flex-column">
    <div class="gbody px-1"><div class="mini">
      <div class="d-flex align-items-center"><button aria-label="三角"><svg class="ic"><use href="#k1"/></svg></button><button aria-label="表格"><svg class="ic"><use href="#k2"/></svg></button><button aria-label="点集"><svg class="ic"><use href="#k3"/></svg></button><button aria-label="孔集"><svg class="ic"><use href="#k4"/></svg></button></div>
      <div class="d-flex align-items-center"><button aria-label="注释"><svg class="ic"><use href="#k5"/></svg></button><button aria-label="尺寸"><svg class="ic"><use href="#k6"/></svg></button><span class="vsep"></span><button aria-label="公差查询"><svg class="ic"><use href="#k7"/></svg></button></div>
    </div></div>
    <div class="gfoot d-flex align-items-center justify-content-between"><span class="ps-1">建模工具 ...</span><i class="dn me-2"></i></div>
  </section>

  <section class="rgroup d-flex flex-column">
    <div class="gbody tight d-flex"><button class="big"><svg class="ib"><use href="#surf"/></svg><span class="cap">曲面</span><i class="dn"></i></button></div>
    <div class="gfoot"></div>
  </section>

  <section class="rgroup d-flex flex-column">
    <div class="gbody d-flex justify-content-center"><button class="big"><svg class="ib"><use href="#measure"/></svg><span class="cap">测量</span></button></div>
    <div class="gfoot d-flex align-items-center ps-1"><span class="me-2">分析</span><i class="dn me-2"></i></div>
  </section>

  <section class="rgroup d-flex flex-column">
    <div class="gbody roomy d-flex">
      <button class="big"><svg class="ib"><use href="#moveo"/></svg><span class="cap">移动对象</span></button>
      <button class="big"><svg class="ib"><use href="#curve"/></svg><span class="cap">抽取曲线<br>（原有）</span></button>
      <button class="big"><svg class="ib"><use href="#bound"/></svg><span class="cap">包容体</span></button>
    </div>
    <div class="gfoot"></div>
  </section>
</div>

<div class="selbar d-flex align-items-center">
  <label class="pick filter"><select aria-label="选择过滤器"><option>没有选择过滤器</option></select><i class="dn"></i></label>
  <label class="pick scope me-1"><select aria-label="选择范围"><option>整个装配</option></select><i class="dn"></i></label>
  <button class="tool" aria-label="选择组"><svg class="ic"><use href="#t1"/></svg></button>
  <button class="tool" aria-label="过滤"><svg class="ic"><use href="#t2"/></svg></button>
  <button class="tool me-0" aria-label="类型过滤"><svg class="ic"><use href="#t3"/></svg></button><button class="more" aria-label="更多"><i class="dn"></i></button>
  <button class="tool" aria-label="重置"><svg class="ic"><use href="#t4"/></svg></button>
  <button class="tool" aria-label="查找"><svg class="ic"><use href="#t5"/></svg></button>
  <button class="tool" aria-label="选择组件"><svg class="ic"><use href="#t6"/></svg></button>
  <button class="tool me-0" aria-label="框选"><svg class="ic"><use href="#t7"/></svg></button><button class="more" aria-label="更多"><i class="dn"></i></button>
  <button class="tool" aria-label="着色面"><svg class="ic"><use href="#t8"/></svg></button>
  <button class="tool" aria-label="实体"><svg class="ic"><use href="#t9"/></svg></button>
  <button class="tool on" aria-label="启用捕捉"><svg class="ic"><use href="#t10"/></svg></button>
  <button class="tool on" aria-label="端点"><svg class="ic"><use href="#t11"/></svg></button>
  <button class="tool on" aria-label="中点"><svg class="ic"><use href="#t12"/></svg></button>
  <button class="tool" aria-label="控制点"><svg class="ic"><use href="#t13"/></svg></button>
  <button class="tool on" aria-label="极点"><svg class="ic"><use href="#t14"/></svg></button>
  <button class="tool on" aria-label="定义点"><svg class="ic"><use href="#t15"/></svg></button>
  <button class="tool" aria-label="交点"><svg class="ic"><use href="#t16"/></svg></button>
  <button class="tool on" aria-label="圆心"><svg class="ic"><use href="#t17"/></svg></button>
  <button class="tool" aria-label="象限点"><svg class="ic"><use href="#t18"/></svg></button>
  <button class="tool on" aria-label="现有点"><svg class="ic"><use href="#t19"/></svg></button>
  <button class="tool on" aria-label="曲线上的点"><svg class="ic"><use href="#t20"/></svg></button>
  <button class="tool" aria-label="面上的点"><svg class="ic"><use href="#t21"/></svg></button>
  <button class="tool" aria-label="小平面顶点"><svg class="ic"><use href="#t22"/></svg></button>
  <button class="tool" aria-label="栅格点"><svg class="ic"><use href="#t23"/></svg></button>
  <span class="vsep ms-2 me-2"></span>
  <div class="endcap d-flex">
  <button class="tool" aria-label="适合窗口"><svg class="ic"><use href="#v1"/></svg></button>
  <button class="tool" aria-label="平移"><svg class="ic"><use href="#v2"/></svg></button>
  <button class="tool" aria-label="旋转"><svg class="ic"><use href="#v3"/></svg></button>
  <button class="tool" aria-label="透视"><svg class="ic"><use href="#v4"/></svg></button>
  <button class="tool" aria-label="显示部件"><svg class="ic"><use href="#v5"/></svg></button>
  <button class="tool" aria-label="布局"><svg class="ic"><use href="#v6"/></svg></button><button class="more" aria-label="更多"><i class="dn"></i></button>
  <button class="tool" aria-label="剖切"><svg class="ic"><use href="#v7"/></svg></button><button class="more" aria-label="更多"><i class="dn"></i></button>
  <button class="tool" aria-label="渲染样式"><svg class="ic"><use href="#v8"/></svg></button><button class="more" aria-label="更多"><i class="dn"></i></button>
  <button class="tool" aria-label="显示隐藏"><svg class="ic"><use href="#v9"/></svg></button><button class="more me-1" aria-label="更多"><i class="dn"></i></button>
  </div>
  <span class="vsep"></span>
</div>

<main class="d-flex flex-grow-1" style="min-height:0">
  <aside class="navi d-flex flex-column flex-shrink-0">
    <div class="top d-flex align-items-center justify-content-end pe-3 flex-shrink-0"><button aria-label="最大化"><svg width="14" height="13"><path d="M1 1h12v11H1z" fill="none" stroke="#111" stroke-width="1.600"/></svg></button></div>
    <div class="tree d-flex flex-column flex-grow-1">
      <div class="hd"></div>
      <ul class="list-unstyled mb-0">
        <li class="edge"><svg width="2" height="14"><path d="M0 0h1v14H0z" fill="#c9cdee"/></svg></li>
        <li class="edge"><svg width="3" height="14"><path d="M0 9q1 3 2.500 2V8" fill="none" stroke="#1d5b86" stroke-width="1.400"/></svg></li>
        <li><span class="pe-5">模型历史记录</span></li>
        <li class="fw-bold pe-2">基准坐标系 (0)</li>
      </ul>
      <div class="empty flex-grow-1"></div>
      <div class="ft d-flex align-items-center justify-content-end pe-2"><svg width="8" height="12"><path d="M1 1l5 5-5 5" fill="none" stroke="#444" stroke-width="2"/></svg></div>
    </div>
    <div class="grip"></div>
    <button class="fold" aria-label="相依性"><svg width="14" height="12"><path d="M0 0h3.500L7 7l3.500-7H14L8.500 12h-3z" fill="#04628a"/></svg></button>
    <button class="fold" aria-label="细节"><svg width="14" height="12"><path d="M0 0h3.500L7 7l3.500-7H14L8.500 12h-3z" fill="#04628a"/></svg></button>
    <button class="fold" aria-label="预览"><svg width="14" height="12"><path d="M0 0h3.500L7 7l3.500-7H14L8.500 12h-3z" fill="#04628a"/></svg></button>
  </aside>

  <section class="view d-flex flex-column flex-grow-1">
    <div class="d-flex flex-shrink-0">
      <div class="doctab d-flex align-items-center"><svg width="16" height="16"><use href="#part"/></svg><span class="ms-1">_model1.prt</span>
        <svg class="ms-2" width="11" height="12"><path d="M9 4V1H1v10h8V9M3 4h4M4 8l5-4 1 1-5 4z" fill="none" stroke="#fff" stroke-width="1.500"/></svg>
        <button class="ms-1 ps-1" aria-label="关闭"><svg width="9" height="9"><path d="M1 1l7 7M8 1L1 8" stroke="#fff" stroke-width="2.200"/></svg></button></div>
    </div>
    <div class="docline flex-shrink-0"></div>
    <div class="scene flex-grow-1">
      <svg width="100%" height="100%">
        <g transform="translate(-94 -230)">
          <path id="cloud" fill="none" stroke="#5c5f61" stroke-opacity=".75" shape-rendering="crispEdges"/>
          <path d="M95.500 230V1006" stroke="#777" stroke-dasharray="1 2 2 3 1 1 3 2 1 4"/>
          <path d="M680.500 230V357M680.500 422V1006M96 389.500H648M713 389.500H2600" stroke="#1a1a1a"/>
          <g fill="none"><circle cx="677" cy="394" r="13" stroke="#fff" stroke-width="2" stroke-opacity=".8" stroke-dasharray="10 10.400" stroke-dashoffset="-5"/><circle cx="677" cy="394" r="14.500" stroke="#000" stroke-width="1.400" stroke-dasharray="12 10.800" stroke-dashoffset="-5"/></g>
          <path d="M675 375h4v17h18v4h-18v18h-4v-18h-17v-4h17z" fill="#000"/><path d="M677 376v37M659 394h37" stroke="#ddd"/>
          <g fill="none" stroke="#1515cf"><path d="M938.500 618V498M990.500 540V602" /><path d="M981.500 575V637" stroke-opacity=".6"/><path d="M938 555.500L990 540M938 555.500L981 575M938 618L1034 589M938 618L1016 653M990 602l43 19-52 16" stroke-opacity=".85"/><path d="M931 618.500h14M938 611v14" stroke-width="2"/></g>
          <path d="M938.500 494l3.500 16h-7zM1041 587l-12 6-2-5zM1022 656.500l-12-2 3-6z" fill="#0d0dcc"/>
          <g font-family="Liberation Sans" font-size="13" fill="#2424d6" text-anchor="middle"><text x="938" y="493">Z</text><text x="1047" y="589">Y</text><text x="1027" y="663">X</text></g>
          <g stroke="#a3a5a6" fill="#cfd0d1" fill-opacity=".6"><path d="M158 918l19-6 16 8v22l-19 6-16-9z"/><path d="M158 918l16 8 19-6M174 926v22M177 912v22l16 8M177 934l-19 5" fill="none"/></g>
          <path d="M160 941l22-7" stroke="#a5c4a5" stroke-width="3"/><path d="M190 931l-10 0 2 6z" fill="#93b893"/>
          <path d="M157 940V912" stroke="#0c35b8" stroke-width="3"/><path d="M157 902l3.500 11h-7z" fill="#0c2fa6"/>
          <path d="M159 943l18 8" stroke="#d2301f" stroke-width="4"/><path d="M184 954l-10 0 3-7z" fill="#c02416"/>
          <circle cx="157" cy="942" r="4" fill="#d6d8da" stroke="#8b9094"/>
          <g font-family="Liberation Sans" font-size="13" text-anchor="middle"><text x="157" y="902" fill="#2c4bd0">Z</text><text x="187" y="960" fill="#d23a2c">X</text><text x="195" y="935" fill="#7fa77f" font-size="11">Y</text></g>
        </g>
      </svg>
    </div>
  </section>
</main>

<footer class="status flex-shrink-0">，或者双击某一对象</footer>

<script>
// Point cloud: each block is [origin x, origin y, x units per pixel, y units per pixel, "x,y x,y ..."]
const blocks=[
[90,440,2.8,2.7034,"127,62 180,55 250,62 305,62 162,149 215,149 341,149 268,108 272,135 275,150 281,158 292,180 297,192 298,206 303,220 309,233 315,245 317,255 322,265 328,272 335,279 345,285 365,292 355,196 358,215 364,232 370,244 377,262 384,280 387,292 391,306 398,318 404,330 407,342 412,352 419,360 431,370 454,379 480,393 178,196 184,220 190,243 198,263 204,280 208,293 214,306 222,320 228,334 232,345 239,356 246,366 256,371 275,379 338,400 268,282 272,309 281,330 290,352 298,380 303,394 311,406 315,420 318,432 324,443 335,452 345,458 365,466 390,482 427,320 469,335 527,357 592,377 655,401 715,421 765,436 803,448 827,455 838,461 848,466 858,470 866,475 875,480 895,484 920,487 956,494 976,490 379,422 437,443 502,463 566,487 625,505 676,523 715,536 738,541 748,548 758,552 766,556 774,560 785,564 805,569 830,573 427,491 469,509 527,531 592,550 655,574 715,592 765,609 803,622 827,628 838,634 849,639 858,642 866,646 875,650 895,656 920,660 956,668 517,401 558,422 616,443 681,463 743,487 795,490 850,508 891,536 917,540 928,549 940,553 950,557 958,560 966,564 985,569 1006,574 1045,581 989,3 989,50 989,98 982,125 990,153 998,163 989,220 995,295 998,335 1075,3 1080,12 1076,50 1074,66 1076,90 1074,135 1074,184 1074,212 1086,209 1074,240 1086,248 1074,308 1097,284 1164,50 1164,98 1157,125 1164,153 1164,220 1174,295 1253,3 911,250 933,290 841,375 886,403 1010,375 1081,380 1107,378 1190,375 1017,456 1111,446 1097,456 1195,456 934,461 1010,508 1022,533 1081,512 1107,543 1117,525 1166,522 1202,533 1251,525 1362,529 1488,542 1076,606 1098,593 1116,597 1171,597 1028,612 1113,620 1160,615 1206,612 1256,608 1272,614 1340,612 1399,629 1451,614 1544,636 1115,682 1115,698 1083,684 1166,693 1206,684 1251,700 1362,704 1488,716 1010,679 1027,684 743,684 743,764 743,832 748,901 743,970 738,1052 743,1158 722,1119 833,597 833,678 850,682 833,741 833,773 838,812 833,852 832,884 833,917 827,966 838,988 833,1058 833,1072 808,1032 922,593 940,595 922,684 922,764 922,832 928,901 922,970 918,1052 922,1158 1028,769 1028,849 1032,919 1040,992 970,1003 895,1035 984,1046 881,1089 897,1119 984,1122 1045,1067 1060,1089 1054,1135 1071,1133 970,1176 895,1209 808,1206 833,1245 805,1122 827,1138 793,1092 780,1112 764,1120 761,1126 768,1126 704,1179 690,1198 674,1207 670,1213 676,1214 880,1179 866,1198 853,1207 850,1213 857,1214 793,1266 780,1286 764,1293 761,1299 767,1300 1115,759 1115,770 1118,833 1116,849 1116,858 1128,906 1116,935 1116,940 1134,980 1107,1000 1117,1005 1148,1046 1128,1077 1146,1108 1134,1150 1155,1158 1208,769 1206,849 1208,919 1195,910 1216,992 1285,1000 1222,1067 1195,1083 1238,1135 1236,1194 1251,953 1340,867 1340,1040 1415,899 1430,953 1507,812 1507,985 1060,1194 1068,1245 1076,1293 1083,1329 1083,1358 1088,1381 1090,1404 1090,1423 1090,1439 1090,1453 1090,1468 1087,1482 1083,1493 1082,1502 1080,1512 1078,1521 1166,1207 1146,1220 1171,1242 1148,1279 1178,1295 1155,1329 1180,1313 1180,1325 1180,1337 1180,1347 1180,1358 1180,1370 1180,1381 1166,1381 1178,1393 1175,1402 1171,1411 1170,1420 1170,1430 1174,1441 1178,1468 1180,1490 1180,1508 1180,1525 1244,1245 1256,1293 1262,1329 1263,1358 1268,1381 1269,1404 1269,1423 1269,1439 1269,1455 1267,1472 1262,1488 1261,1500 1259,1511 1258,1521"],
[650,560,3,3,"11,338 68,256 68,449 20,577 29,637 15,1333 346,163 328,178 328,193 376,208 251,259 233,271 248,280 233,289 281,304 350,283 443,259 425,271 425,289 452,307 472,304 698,304 164,352 151,376 253,379 247,379 346,355 328,367 343,376 328,385 370,364 376,400 352,403 394,400 445,379 427,394 505,367 544,403 601,400 674,346 793,400 913,391 307,421 424,424 430,430 427,436 418,439 418,454 410,463 275,460 247,472 298,496 350,475 332,490 460,460 469,460 452,499 490,496 523,490 577,442 601,463 769,442 698,499 818,487 1010,487 1159,442 116,478 214,517 211,577 328,520 334,526 322,535 322,553 406,517 519,520 525,526 514,535 514,550 505,559 370,556 394,595 427,589 425,616 430,622 427,628 418,631 418,649 457,628 307,613 116,673 674,538 913,586 1063,540 1255,540 1396,487 1300,586 1471,625 1297,649 1396,682 1159,637 1135,691 361,724 466,727 553,724 445,757 442,762 447,759 457,793 457,820 370,826 349,855 346,859 351,854 562,826 541,855 538,860 543,854 649,841 361,889 514,880 553,889 571,880 653,898 760,868 749,801 855,772 893,826 952,868 844,898 989,727 1039,787 1084,826 1231,787 1201,748 1393,748 1376,721 511,913 466,919 544,940 553,937 745,937 447,949 442,954 450,952 476,976 418,976 418,985 457,985 415,1009 379,1018 447,1036 358,1048 346,1057 322,1080 313,1093 292,1119 284,1113 265,1147 250,1153 244,1177 217,1189 226,1204 214,1228 196,1216 169,1243 112,1237 148,1273 610,976 667,976 855,964 749,994 989,919 586,1012 607,1009 550,1048 640,1036 649,1033 514,1072 514,1080 571,1072 616,1087 490,1108 511,1105 476,1113 454,1143 442,1153 418,1177 409,1189 379,1210 388,1216 346,1246 361,1243 307,1207 340,1273 313,1285 322,1300 292,1312 310,1324 132,1300 118,1324 207,1333 214,1303 424,1273 404,1303 544,1132 520,1179 519,1183 682,1108 730,1141 646,1167 711,1183 586,1204 634,1237 550,1264 616,1275 616,1279 742,1264 825,1237 841,1201 937,1105 1045,1167 1033,1201 1141,1072 1237,1167 1258,1138 1141,1264 937,1300 730,1333 1354,1042 1354,1234 1450,1138 1460,1113 1471,820 1297,841 1135,883 1075,235 1148,208 1172,138 1198,184 1234,170 1244,111 1270,151 1295,87 1312,127 1330,73 1354,106 1366,55 1396,79 1411,31 1450,10 1418,67 1429,67 1437,70 1453,76 1390,184 1426,170 1462,151 1411,223 1340,208 1366,247 1330,265 1295,280 1244,304 1268,235 1172,331"],
[1140,540,3,3,"22,43 43,31 55,31 64,34 79,40 115,61 181,100 139,127 151,127 160,130 175,136 118,139 211,157 265,151 19,157 76,166 37,187 46,187 85,196 277,196 343,190 22,232 43,222 55,222 64,226 79,232 115,253 181,292 169,247 247,286 361,247 441,232 484,247 505,253 505,259 496,283 484,310 439,286 346,328 388,343 409,349 409,355 400,379 388,407 343,382 265,343 537,328 580,343 601,349 601,355 592,379 580,407 463,353 460,361 478,373 367,450 364,458 385,470 441,424 484,439 505,445 505,451 496,478 484,502 556,458 553,450 574,470 673,458 463,544 460,553 478,565 574,556 767,556 736,604 880,565 888,601 1018,601 1041,633 139,595 22,646 190,661 46,691 235,691 349,633 373,637 559,622 532,664 673,655 694,685 784,661 793,697 820,688 832,703 640,703 655,718 976,661 940,688 922,697 985,697 1024,688 946,730 1102,656 1114,697 1129,664 1129,669 1129,679 1129,700 1137,730 1006,753 1036,760 1036,768 1036,777 1036,786 1036,796 1018,793 1041,826 1120,784 1120,792 1147,757 1198,753 1225,760 1225,766 1225,777 1225,796 1168,810 1102,850 1129,857 1129,862 1129,871 1129,880 1129,889 253,730 277,733 286,757 94,757 97,783 139,787 463,718 445,730 469,733 436,760 349,826 373,829 559,814 532,856 190,853 628,760 598,783 718,784 724,784 736,799 790,783 844,784 880,757 888,793 910,784 919,784 928,784 694,877 820,880 940,880 1024,880 1051,853 1243,853 1072,905 1204,905 1264,905 1147,949 1225,964 1231,988 1108,1000 1168,1000 1300,1000 1129,1060 1135,1084 1240,1048 1249,1076 1321,1060 1327,1084 1204,1097 1255,1126 85,1078 283,1051 469,1036 649,1024 814,1018 955,1018 187,1147 181,1174 376,1132 379,1147 553,1120 565,1132 718,1113 745,1120 859,1113 910,1113 1048,1113 85,1270 283,1243 469,1225 649,1216 814,1210 955,1210 1144,1144 1152,1171 1159,1222 1166,1255 1166,1264 1166,1270 1166,1279 1162,1303 1152,1327 1150,1336 1147,1342 1144,1348 1144,1354 1144,1360 1144,1364 1144,1369 1144,1374 1144,1381 1225,1156 1231,1180 1261,1160 1261,1168 1261,1174 1261,1182 1258,1207 1249,1231 1240,1240 1246,1240 1240,1248 1240,1255 1240,1261 1240,1267 1240,1270 1240,1273 1240,1276 1240,1279 1240,1282 1240,1285 1246,1267 1255,1318 1261,1351 1261,1358 1261,1364 1261,1372 1336,1144 1343,1171 1351,1222 1357,1255 1357,1264 1357,1270 1357,1279 1354,1303 1345,1327 1343,1336 1339,1342 1336,1348 1336,1354 1336,1360 1336,1364 1336,1369 1336,1374 1336,1381"],
[0,0,0.954,0.954,"665,339 671,339 677,339 682,339 687,340 692,340 697,339 699,342 704,347 710,351 716,357 720,361 727,369 731,373 692,369 700,369 716,369 722,369 730,367 738,366 746,364 754,362 762,362 768,363 776,365 660,399 670,399 680,399 686,400 692,399 696,401 698,401 702,397 708,401 712,397 720,395 728,394 736,396 744,398 752,400 760,400 768,397 776,395 784,393 792,392 800,394 726,431 732,430 738,428 744,426 752,424 760,423 768,424 776,426 730,380 736,384 742,388 710,407 716,414 720,420 800,291 806,296 812,302 818,308 824,315 830,321 836,330 842,337 848,344 854,350 860,356 866,370 832,261 838,266 844,270 850,276 856,281 862,288 868,294 872,300 878,307 884,313 888,320 892,328 895,334 898,342 900,352 810,231 818,240 824,250 832,250 780,225 786,240 790,255 800,265 816,400 830,402 846,404 860,404 876,404 894,408 908,411 818,430 828,433 846,437 860,440 876,443 900,428 914,434 924,437 932,441 938,443 866,381 878,389 832,378 840,371 850,400 856,453 868,457 882,463 896,470 906,474 450,265 466,262 452,285 484,286 420,298 452,310 466,318 484,327 420,330 424,350 452,346 466,362 484,360 420,380 452,372 466,384 424,400 452,395 484,394 420,420 452,404 466,426 486,432 422,440 452,438 466,450 482,442 340,225 376,228 390,240 350,235 370,250 386,262 360,222 348,262 376,282 406,300 410,320 500,225 520,224 540,226 600,236 636,226 572,296 604,322 600,352 140,232 160,240 180,246 142,256 170,278 200,290 102,290 140,300 168,318 136,348 174,352 120,428 150,428 182,430 140,410 124,228 152,222 136,385 174,388"]
];
let d="";
for(const [ox,oy,kx,ky,list] of blocks)for(const p of list.split(" ")){const [x,y]=p.split(",");d+="M"+Math.round(ox+x/kx)+" "+(Math.round(oy+y/ky)+.5)+"h1"}
for(let x=96;x<1560;x+=1+(x*7)%11)d+="M"+x+" 230.5h1";
document.getElementById("cloud").setAttribute("d",d);
</script>
</body>
</html>
